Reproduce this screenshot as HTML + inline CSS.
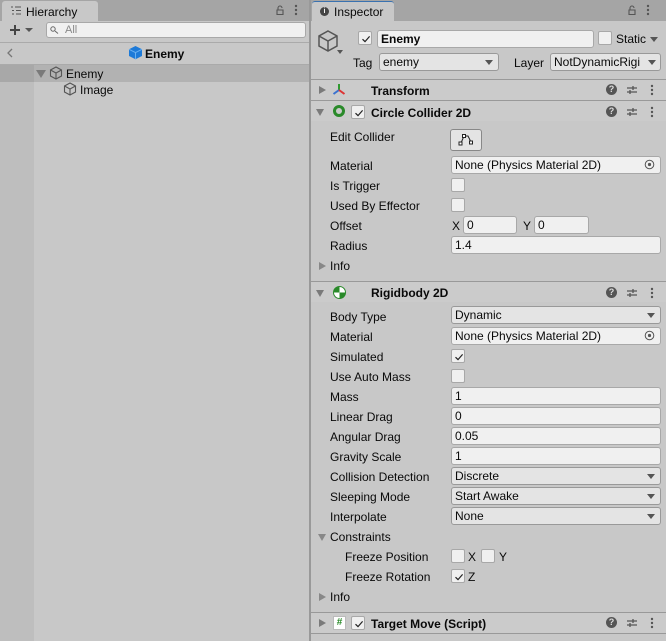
<!DOCTYPE html>
<html><head><style>
*{box-sizing:border-box;margin:0;padding:0}
body{width:666px;height:641px;background:#c8c8c8;font-family:"Liberation Sans",sans-serif;font-size:12px;color:#090909;position:relative;overflow:hidden}
.a{position:absolute}
.t{position:absolute;white-space:nowrap;line-height:14px}
.f{position:absolute;background:#f0f0f0;border:1px solid #a8a8a8;border-radius:3px;height:18px;padding-left:3px;line-height:16px;white-space:nowrap}
.dd{background:#e4e4e4;border-color:#999}
.cb{position:absolute;width:14px;height:14px;background:#f0f0f0;border:1px solid #a8a8a8;border-radius:2px}
.cb svg{position:absolute;left:2px;top:2px}
.hdr{position:absolute;left:311px;right:0;height:21px;border-top:1px solid #999;background:#cbcbcb}
.b{font-weight:bold}
.tri{position:absolute;width:0;height:0}
.r{border-left:7px solid #7a7a7a;border-top:4px solid transparent;border-bottom:4px solid transparent}
.d{border-top:7px solid #7a7a7a;border-left:4px solid transparent;border-right:4px solid transparent}
.q{position:absolute;width:11px;height:11px;border-radius:50%;background:#555;color:#ddd;font-size:9px;line-height:11px;text-align:center;font-weight:bold}
</style></head><body>
<svg width="0" height="0" style="position:absolute"><defs>
<symbol id="ck" viewBox="0 0 10 10"><path d="M1.5 5.2 L4 7.6 L8.6 2.4" fill="none" stroke="#222" stroke-width="1.2"/></symbol>
<symbol id="cube" viewBox="0 0 14 14"><path d="M7 1 L12.5 4 V10 L7 13 L1.5 10 V4 Z M1.5 4 L7 7 L12.5 4 M7 7 V13" fill="none" stroke="#555" stroke-width="1.1"/></symbol>
<symbol id="sl" viewBox="0 0 12 12"><path d="M1 4H11M1 8H11M7 2V6M4 6V10" stroke="#555" stroke-width="1.3" fill="none"/></symbol>
<symbol id="dots" viewBox="0 0 4 12"><circle cx="2" cy="2" r="1.2" fill="#555"/><circle cx="2" cy="6" r="1.2" fill="#555"/><circle cx="2" cy="10" r="1.2" fill="#555"/></symbol>
<symbol id="lock" viewBox="0 0 10 10"><path d="M2 5H8V9.5H2Z M3 5V3A2 2 0 0 1 7 3" fill="none" stroke="#555" stroke-width="1.1"/></symbol>
</defs></svg>
<!-- tab bars -->
<div class="a" style="left:0;top:0;width:666px;height:21px;background:#a5a5a5"></div>
<div class="a" style="left:2px;top:1px;width:96px;height:21px;background:#c8c8c8;border-radius:3px 3px 0 0"></div>
<svg class="a" style="left:11px;top:6px" width="10" height="9"><path d="M0 1H2M4 1H10M1 4.5H3M5 4.5H10M1 8H3M5 8H10" stroke="#555" stroke-width="1"/></svg>
<div class="t" style="left:26px;top:5px">Hierarchy</div>
<svg class="a" style="left:275px;top:5px" width="10" height="10"><use href="#lock"/></svg>
<svg class="a" style="left:294px;top:4px" width="4" height="12"><use href="#dots"/></svg>
<div class="a" style="left:309px;top:0;width:2px;height:641px;background:#999"></div>
<div class="a" style="left:312px;top:1px;width:82px;height:21px;background:#c8c8c8;border-top:1px solid #3a72b0;border-radius:3px 3px 0 0"></div>
<div class="a" style="left:320px;top:7px;width:9px;height:9px;border-radius:50%;background:#444;color:#fff;font-size:7px;line-height:9px;text-align:center;font-weight:bold">i</div>
<div class="t" style="left:334px;top:5px">Inspector</div>
<svg class="a" style="left:627px;top:5px" width="10" height="10"><use href="#lock"/></svg>
<svg class="a" style="left:646px;top:4px" width="4" height="12"><use href="#dots"/></svg>

<!-- hierarchy -->
<svg class="a" style="left:9px;top:24px" width="12" height="12"><path d="M6 1V11M1 6H11" stroke="#444" stroke-width="2"/></svg>
<div class="tri d" style="left:25px;top:28px;border-top-width:4px;border-left-width:4px;border-right-width:4px;border-top-color:#555"></div>
<div class="f" style="left:46px;top:22px;width:260px;height:16px;line-height:14px;color:#888;font-size:11px;padding-left:18px">All</div>
<svg class="a" style="left:50px;top:26px" width="9" height="8"><circle cx="3" cy="3" r="2.2" fill="none" stroke="#666"/><path d="M5 5L8 7.5" stroke="#666"/></svg>
<div class="a" style="left:0;top:42px;width:309px;height:1px;background:#aaa"></div>
<svg class="a" style="left:7px;top:48px" width="6" height="10"><path d="M5 1L1 5L5 9" fill="none" stroke="#777" stroke-width="1.3"/></svg>
<svg class="a" style="left:128px;top:45px" width="15" height="15"><path d="M7.5 1L14 4.3V11L7.5 14.3L1 11V4.3Z" fill="#1d7ad8"/><path d="M1 4.3L7.5 7.6L14 4.3M7.5 7.6V14.3" stroke="#6ab0f0" fill="none" stroke-width="1"/></svg>
<div class="t b" style="left:145px;top:47px">Enemy</div>
<div class="a" style="left:0;top:64px;width:309px;height:1px;background:#aaa"></div>
<div class="a" style="left:0;top:65px;width:34px;height:576px;background:#bebebe"></div>
<div class="a" style="left:0;top:65px;width:34px;height:17px;background:#a8a8a8"></div>
<div class="a" style="left:34px;top:65px;width:275px;height:17px;background:#b2b2b2"></div>
<div class="tri d" style="left:36px;top:70px;border-top-width:8px;border-left-width:5px;border-right-width:5px"></div>
<svg class="a" style="left:49px;top:66px" width="14" height="14"><use href="#cube"/></svg>
<div class="t" style="left:66px;top:67px">Enemy</div>
<svg class="a" style="left:63px;top:82px" width="14" height="14"><use href="#cube"/></svg>
<div class="t" style="left:80px;top:83px">Image</div>

<!-- inspector header -->
<svg class="a" style="left:317px;top:29px" width="22" height="24"><path d="M11 2L20 7V17L11 22L2 17V7Z M2 7L11 12L20 7M11 12V22" fill="none" stroke="#555" stroke-width="1.5"/></svg>
<div class="tri d" style="left:337px;top:50px;border-top-width:4px;border-left-width:3px;border-right-width:3px;border-top-color:#555"></div>
<div class="cb" style="left:358px;top:31px"><svg width="10" height="10"><use href="#ck"/></svg></div>
<div class="f b" style="left:377px;top:30px;width:217px;height:18px">Enemy</div>
<div class="cb" style="left:598px;top:31px"></div>
<div class="t" style="left:616px;top:32px">Static</div>
<div class="tri d" style="left:650px;top:37px;border-top-width:5px;border-top-color:#555"></div>
<div class="t" style="left:353px;top:56px">Tag</div>
<div class="f dd" style="left:379px;top:53px;width:120px">enemy</div>
<div class="tri d" style="left:485px;top:60px;border-top-width:5px;border-top-color:#555"></div>
<div class="t" style="left:514px;top:56px">Layer</div>
<div class="f dd" style="left:550px;top:53px;width:111px">NotDynamicRigi</div>
<div class="tri d" style="left:648px;top:60px;border-top-width:5px;border-top-color:#555"></div>

<!-- Transform -->
<div class="hdr" style="top:79px"></div>
<div class="tri r" style="left:319px;top:86px"></div>
<svg class="a" style="left:332px;top:83px" width="14" height="14"><path d="M7 7V1" stroke="#2f9a2f" stroke-width="2"/><path d="M7 7L1.5 11" stroke="#3a72d0" stroke-width="2"/><path d="M7 7L12.5 11" stroke="#d33" stroke-width="2"/></svg>
<div class="t b" style="left:371px;top:84px">Transform</div>
<div class="q" style="left:606px;top:84px">?</div>
<svg class="a" style="left:626px;top:84px" width="12" height="12"><use href="#sl"/></svg>
<svg class="a" style="left:650px;top:84px" width="4" height="12"><use href="#dots"/></svg>

<!-- Circle Collider -->
<div class="hdr" style="top:100px"></div>
<div class="tri d" style="left:316px;top:109px"></div>
<div class="a" style="left:333px;top:105px;width:12px;height:12px;border:3px solid #2a8a2a;border-radius:50%"></div>
<div class="cb" style="left:351px;top:105px"><svg width="10" height="10"><use href="#ck"/></svg></div>
<div class="t b" style="left:371px;top:106px">Circle Collider 2D</div>
<div class="q" style="left:606px;top:106px">?</div>
<svg class="a" style="left:626px;top:106px" width="12" height="12"><use href="#sl"/></svg>
<svg class="a" style="left:650px;top:106px" width="4" height="12"><use href="#dots"/></svg>
<div class="t" style="left:330px;top:130px">Edit Collider</div>
<div class="a" style="left:450px;top:129px;width:32px;height:22px;border:1px solid #888;border-radius:3px;background:#e4e4e4"></div>
<svg class="a" style="left:458px;top:133px" width="16" height="13"><path d="M3 10L6 3H10L13 9" fill="none" stroke="#222" stroke-width="1"/><rect x="1" y="9" width="3" height="3" fill="#fff" stroke="#222"/><rect x="4.5" y="1.5" width="3" height="3" fill="#fff" stroke="#222"/><rect x="11.5" y="8" width="3" height="3" fill="#fff" stroke="#222"/></svg>
<div class="t" style="left:330px;top:159px">Material</div>
<div class="f" style="left:451px;top:156px;width:210px">None (Physics Material 2D)</div>
<svg class="a" style="left:644px;top:159px" width="11" height="11"><circle cx="5.5" cy="5.5" r="4.3" fill="none" stroke="#555"/><circle cx="5.5" cy="5.5" r="1.6" fill="#555"/></svg>
<div class="t" style="left:330px;top:179px">Is Trigger</div>
<div class="cb" style="left:451px;top:178px"></div>
<div class="t" style="left:330px;top:199px">Used By Effector</div>
<div class="cb" style="left:451px;top:198px"></div>
<div class="t" style="left:330px;top:219px">Offset</div>
<div class="t" style="left:452px;top:219px">X</div>
<div class="f" style="left:463px;top:216px;width:54px">0</div>
<div class="t" style="left:523px;top:219px">Y</div>
<div class="f" style="left:534px;top:216px;width:55px">0</div>
<div class="t" style="left:330px;top:239px">Radius</div>
<div class="f" style="left:451px;top:236px;width:210px">1.4</div>
<div class="tri r" style="left:319px;top:262px;border-left-color:#888"></div>
<div class="t" style="left:330px;top:259px">Info</div>

<!-- Rigidbody -->
<div class="hdr" style="top:281px"></div>
<div class="tri d" style="left:316px;top:290px"></div>
<div class="a" style="left:333px;top:286px;width:13px;height:13px;border-radius:50%;background:conic-gradient(#fff 0 25%,#2a8a2a 25% 50%,#fff 50% 75%,#2a8a2a 75%);border:1.5px solid #2a8a2a"></div>
<div class="t b" style="left:371px;top:286px">Rigidbody 2D</div>
<div class="q" style="left:606px;top:287px">?</div>
<svg class="a" style="left:626px;top:287px" width="12" height="12"><use href="#sl"/></svg>
<svg class="a" style="left:650px;top:287px" width="4" height="12"><use href="#dots"/></svg>
<div class="t" style="left:330px;top:310px">Body Type</div>
<div class="f dd" style="left:451px;top:306px;width:210px">Dynamic</div>
<div class="tri d" style="left:647px;top:313px;border-top-width:5px;border-top-color:#555"></div>
<div class="t" style="left:330px;top:330px">Material</div>
<div class="f" style="left:451px;top:327px;width:210px">None (Physics Material 2D)</div>
<svg class="a" style="left:644px;top:330px" width="11" height="11"><circle cx="5.5" cy="5.5" r="4.3" fill="none" stroke="#555"/><circle cx="5.5" cy="5.5" r="1.6" fill="#555"/></svg>
<div class="t" style="left:330px;top:350px">Simulated</div>
<div class="cb" style="left:451px;top:349px"><svg width="10" height="10"><use href="#ck"/></svg></div>
<div class="t" style="left:330px;top:370px">Use Auto Mass</div>
<div class="cb" style="left:451px;top:369px"></div>
<div class="t" style="left:330px;top:390px">Mass</div>
<div class="f" style="left:451px;top:387px;width:210px">1</div>
<div class="t" style="left:330px;top:410px">Linear Drag</div>
<div class="f" style="left:451px;top:407px;width:210px">0</div>
<div class="t" style="left:330px;top:430px">Angular Drag</div>
<div class="f" style="left:451px;top:427px;width:210px">0.05</div>
<div class="t" style="left:330px;top:450px">Gravity Scale</div>
<div class="f" style="left:451px;top:447px;width:210px">1</div>
<div class="t" style="left:330px;top:470px">Collision Detection</div>
<div class="f dd" style="left:451px;top:467px;width:210px">Discrete</div>
<div class="tri d" style="left:647px;top:474px;border-top-width:5px;border-top-color:#555"></div>
<div class="t" style="left:330px;top:490px">Sleeping Mode</div>
<div class="f dd" style="left:451px;top:487px;width:210px">Start Awake</div>
<div class="tri d" style="left:647px;top:494px;border-top-width:5px;border-top-color:#555"></div>
<div class="t" style="left:330px;top:510px">Interpolate</div>
<div class="f dd" style="left:451px;top:507px;width:210px">None</div>
<div class="tri d" style="left:647px;top:514px;border-top-width:5px;border-top-color:#555"></div>
<div class="tri d" style="left:318px;top:534px;border-top-color:#888"></div>
<div class="t" style="left:330px;top:530px">Constraints</div>
<div class="t" style="left:345px;top:550px">Freeze Position</div>
<div class="cb" style="left:451px;top:549px"></div>
<div class="t" style="left:468px;top:550px">X</div>
<div class="cb" style="left:481px;top:549px"></div>
<div class="t" style="left:499px;top:550px">Y</div>
<div class="t" style="left:345px;top:570px">Freeze Rotation</div>
<div class="cb" style="left:451px;top:569px"><svg width="10" height="10"><use href="#ck"/></svg></div>
<div class="t" style="left:468px;top:570px">Z</div>
<div class="tri r" style="left:319px;top:593px;border-left-color:#888"></div>
<div class="t" style="left:330px;top:590px">Info</div>

<!-- Target Move -->
<div class="hdr" style="top:612px;height:21px"></div>
<div class="tri r" style="left:319px;top:619px"></div>
<div class="a" style="left:333px;top:616px;width:13px;height:14px;background:#fff;border:1px solid #bbb;color:#2a8a2a;font-size:10px;line-height:12px;text-align:center;font-weight:bold">#</div>
<div class="cb" style="left:351px;top:616px"><svg width="10" height="10"><use href="#ck"/></svg></div>
<div class="t b" style="left:371px;top:617px">Target Move (Script)</div>
<div class="q" style="left:606px;top:617px">?</div>
<svg class="a" style="left:626px;top:617px" width="12" height="12"><use href="#sl"/></svg>
<svg class="a" style="left:650px;top:617px" width="4" height="12"><use href="#dots"/></svg>
<div class="a" style="left:311px;top:633px;width:355px;height:1px;background:#999"></div>
</body></html>
